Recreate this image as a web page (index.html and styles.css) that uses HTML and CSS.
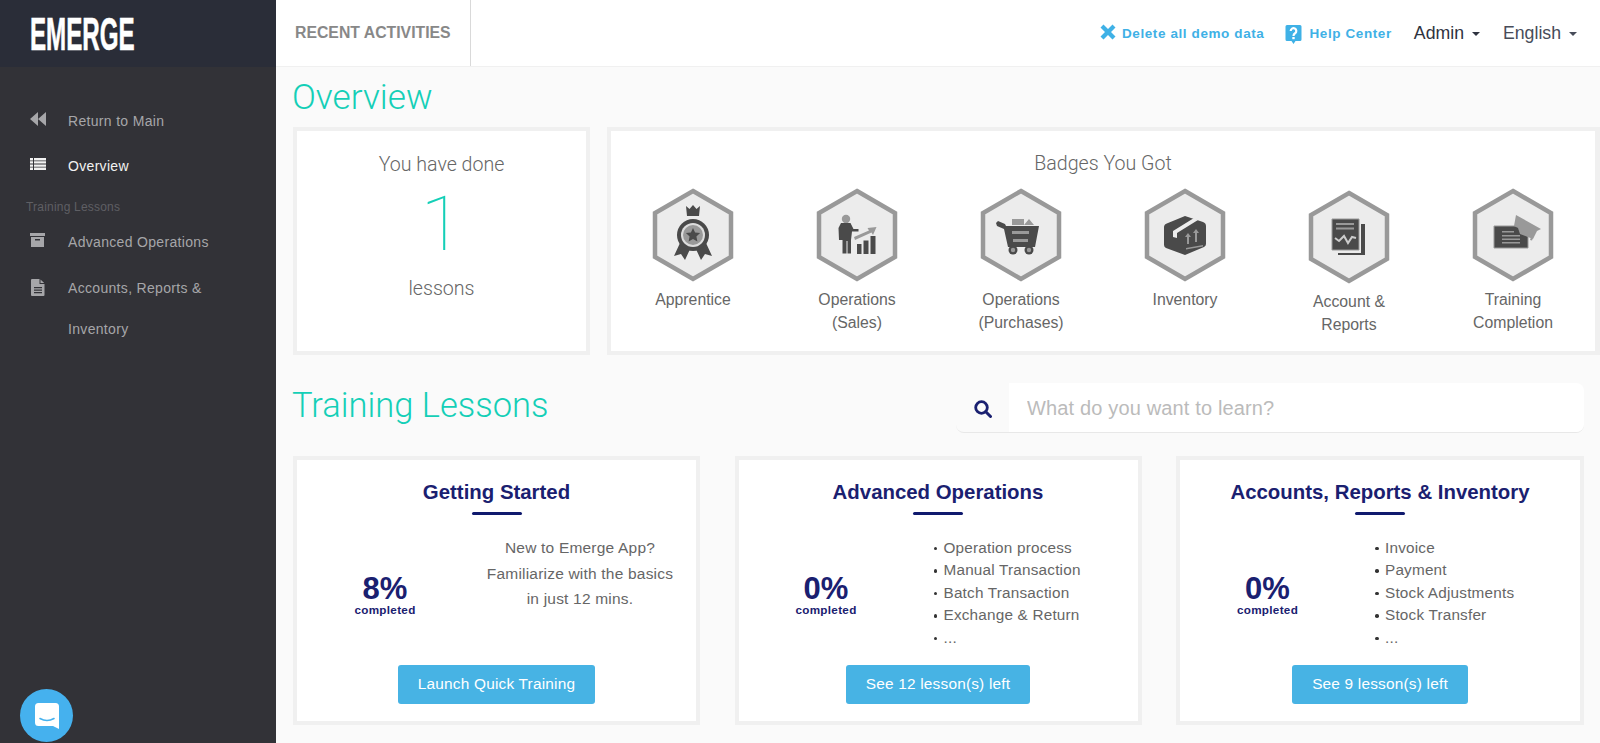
FILE: index.html
```html
<!DOCTYPE html>
<html lang="en">
<head>
<meta charset="utf-8">
<title>Emerge</title>
<link rel="stylesheet" href="styles.css">
</head>
<body>
<aside class="sidebar">
  <div class="brand"><span class="logo">EMERGE</span></div>
  <nav class="nav">
    <a class="nav-item"><svg class="nav-icon" viewBox="0 0 16 14"><path d="M8 0v14L0 7zM16 0v14L8 7z"/></svg><span>Return to Main</span></a>
    <a class="nav-item active"><svg class="nav-icon" viewBox="0 0 16 14"><path d="M0 1h3v2.400H0zM4 1h12v2.400H4zM0 4.200h3v2.400H0zM4 4.200h12v2.400H4zM0 7.400h3v2.400H0zM4 7.400h12v2.400H4zM0 10.600h3V13H0zM4 10.600h12V13H4z"/></svg><span>Overview</span></a>
    <div class="nav-head">Training Lessons</div>
    <a class="nav-item"><svg class="nav-icon" viewBox="0 0 16 14"><path fill-rule="evenodd" d="M0 0h15v3H0zM1 4h13v10H1zM5 6v1.500h5V6z"/></svg><span>Advanced Operations</span></a>
    <a class="nav-item multi"><svg class="nav-icon tall" viewBox="0 0 14 17"><path fill-rule="evenodd" d="M1 0h7.500v5h5v11a1 1 0 0 1-1 1H1a1 1 0 0 1-1-1V1a1 1 0 0 1 1-1zM3 8v1.200h8V8zM3 10.500v1.200h8v-1.200zM3 13v1.200h8V13zM9.500 0.500 13.200 4H9.500z"/></svg><span>Accounts, Reports &amp; Inventory</span></a>
  </nav>
</aside>

<div class="main">
  <header class="topbar">
    <div class="recent">RECENT ACTIVITIES</div>
    <div class="top-actions">
      <a class="link"><svg class="link-x" viewBox="0 0 16 16"><path d="M3.500 0.500 8 5l4.500-4.500 3 3L11 8l4.500 4.500-3 3L8 11l-4.500 4.500-3-3L5 8 .5 3.500z"/></svg>Delete all demo data</a>
      <a class="link help"><svg class="link-help" viewBox="0 0 16 19"><path d="M1.500 0h13A1.500 1.500 0 0 1 16 1.500v13a1.500 1.500 0 0 1-1.500 1.500H10l-2 3-2-3H1.500A1.500 1.500 0 0 1 0 14.500v-13A1.500 1.500 0 0 1 1.500 0z"/><path fill="none" stroke="#fff" stroke-width="2.200" d="M5.200 6a2.800 2.800 0 1 1 4.400 2.300C8.500 9 8 9.400 8 11"/><path fill="#fff" d="M6.800 12h2.400v2.200H6.800z"/></svg>Help Center</a>
      <a class="menu">Admin<i class="caret"></i></a>
      <a class="menu lang">English<i class="caret"></i></a>
    </div>
  </header>

  <main class="content">
    <h1 class="title overview-title">Overview</h1>
    <section class="summary">
      <div class="panel done">
        <div class="done-top">You have done</div>
        <div class="done-num">1</div>
        <div class="done-bottom">lessons</div>
      </div>
      <div class="panel badges">
        <div class="badges-title">Badges You Got</div>
        <div class="badge-row">
          <div class="badge">
            <svg class="hex" viewBox="0 0 82 94"><polygon class="hex-shape" points="41,3 79,25 79,69 41,91 3,69 3,25"/>
              <path class="d" d="M34 18l3.500 3 3.500-4 3.500 4 3.500-3-1 10H35z"/>
              <path class="d" d="M28 55l-6 13 7-2 4 6 6-13zM54 55l6 13-7-2-4 6-6-13z"/>
              <circle class="d" cx="41" cy="47" r="16"/><circle cx="41" cy="47" r="12" fill="#ddd"/><circle class="g" cx="41" cy="47" r="10"/>
              <path class="d" d="M41 40l2.100 4.600 5 .5-3.700 3.400 1 4.900-4.400-2.500-4.400 2.500 1-4.900-3.700-3.400 5-.5z"/></svg>
            <div class="badge-label">Apprentice</div>
          </div>
          <div class="badge">
            <svg class="hex" viewBox="0 0 82 94"><polygon class="hex-shape" points="41,3 79,25 79,69 41,91 3,69 3,25"/>
              <circle class="g" cx="30" cy="31" r="4.200"/>
              <path class="d" d="M25 35h9.500l3 6 5 0v2.500h-6.500L35 52v13.500h-3.500V53h-1v12.500H26.500V52H23l-.5-12z"/>
              <path class="g" d="M38 49l15-6.500-1.500-2.500 9-1-3.500 8-1.500-2.500L39 52z"/>
              <path class="d" d="M41 56h4.500v10H41zM47.500 52.500h5V66h-5zM54.500 48h5v18h-5z"/></svg>
            <div class="badge-label">Operations<br>(Sales)</div>
          </div>
          <div class="badge">
            <svg class="hex" viewBox="0 0 82 94"><polygon class="hex-shape" points="41,3 79,25 79,69 41,91 3,69 3,25"/>
              <path class="g" d="M32 31h12v6H32zM44 37l5-6 5 6z"/>
              <path class="d" d="M16 35l2-2 7 3 1 2h33l-4 21H28l-4-18-7-3z"/>
              <path class="g" d="M32 43h17v3H32zM33 51h15v3H33z"/>
              <circle class="d" cx="33" cy="62" r="4.500"/><circle class="d" cx="49" cy="62" r="4.500"/><circle class="g" cx="33" cy="62" r="2.200"/><circle class="g" cx="49" cy="62" r="2.200"/></svg>
            <div class="badge-label">Operations<br>(Purchases)</div>
          </div>
          <div class="badge">
            <svg class="hex" viewBox="0 0 82 94"><polygon class="hex-shape" points="41,3 79,25 79,69 41,91 3,69 3,25"/>
              <path class="d" d="M24 35l17-7 18 6q3 1 3 4v18q0 2-2 3L41 67l-19-7q-2-1-2-3V39q0-3 4-4z"/>
              <path fill="#ececec" d="M29 43l21-13 4 2-21 13v5l-4-1z"/>
              <path class="g" d="M43 56v-7h-2l3-4 3 4h-2v7zM51 54v-9h-2l3-4 3 4h-2v9zM42 60l17-3v1.500l-17 3z"/></svg>
            <div class="badge-label">Inventory</div>
          </div>
          <div class="badge low">
            <svg class="hex" viewBox="0 0 82 94"><polygon class="hex-shape" points="41,3 79,25 79,69 41,91 3,69 3,25"/>
              <path class="d" d="M53 34h4v31H30v-2h23z"/>
              <path class="d" d="M24 29h27v31H24z" stroke="#999"/>
              <path class="g" d="M28 33h18v2H28zM28 37.500h18v2H28z"/>
              <path fill="none" stroke="#ccc" stroke-width="2" d="M27 48l4 3 5-5 4 7 4-6 4 1"/></svg>
            <div class="badge-label">Account &amp;<br>Reports</div>
          </div>
          <div class="badge">
            <svg class="hex" viewBox="0 0 82 94"><polygon class="hex-shape" points="41,3 79,25 79,69 41,91 3,69 3,25"/>
              <path class="d" d="M22 38h34v22H22z" stroke="#999"/>
              <path class="g" d="M30 43h12v1.500H30zM30 47h18v1.500H30zM30 50.500h18v1.500H30zM30 54h18v1.500H30z"/>
              <path class="g" d="M44 27l25 14-4 2-4 8-13-5-2-6-4-2z"/><path class="g" d="M61 44l2 .5-3 8-2-.5z"/></svg>
            <div class="badge-label">Training<br>Completion</div>
          </div>
        </div>
      </div>
    </section>

    <section class="lessons-head">
      <h1 class="title">Training Lessons</h1>
      <div class="search">
        <span class="search-icon"><svg viewBox="0 0 18 18"><circle cx="7.500" cy="7.500" r="5.800" fill="none" stroke="#1a2070" stroke-width="2.800"/><path d="M11.800 11.800 16.500 16.500" stroke="#1a2070" stroke-width="3" stroke-linecap="round"/></svg></span>
        <input class="search-input" type="text" placeholder="What do you want to learn?">
      </div>
    </section>

    <section class="lessons">
      <article class="panel lesson first">
        <h2 class="lesson-title">Getting Started</h2>
        <div class="rule"></div>
        <div class="lesson-body">
          <div class="progress"><div class="pct">8%</div><div class="pct-label">completed</div></div>
          <p class="intro">New to Emerge App?<br>Familiarize with the basics<br>in just 12 mins.</p>
        </div>
        <a class="btn">Launch Quick Training</a>
      </article>
      <article class="panel lesson">
        <h2 class="lesson-title">Advanced Operations</h2>
        <div class="rule"></div>
        <div class="lesson-body">
          <div class="progress"><div class="pct">0%</div><div class="pct-label">completed</div></div>
          <ul class="topics"><li>Operation process</li><li>Manual Transaction</li><li>Batch Transaction</li><li>Exchange &amp; Return</li><li>...</li></ul>
        </div>
        <a class="btn">See 12 lesson(s) left</a>
      </article>
      <article class="panel lesson">
        <h2 class="lesson-title">Accounts, Reports &amp; Inventory</h2>
        <div class="rule"></div>
        <div class="lesson-body">
          <div class="progress"><div class="pct">0%</div><div class="pct-label">completed</div></div>
          <ul class="topics"><li>Invoice</li><li>Payment</li><li>Stock Adjustments</li><li>Stock Transfer</li><li>...</li></ul>
        </div>
        <a class="btn">See 9 lesson(s) left</a>
      </article>
    </section>
  </main>
</div>

<div class="chat"><svg viewBox="0 0 24 26"><path fill="#fff" d="M3.500 0h17A3.500 3.500 0 0 1 24 3.500V26l-6-3H3.500A3.500 3.500 0 0 1 0 19.500v-16A3.500 3.500 0 0 1 3.500 0z"/><path fill="none" stroke="#45b1ee" stroke-width="1.600" stroke-linecap="round" d="M5 15.500q7 4 14 0"/></svg></div>
</body>
</html>
```
FILE: styles.css
```css
* { box-sizing: border-box; }
html, body { margin: 0; height: 100%; }
body {
  display: flex;
  height: 743px;
  overflow: hidden;
  background: #fafafa;
  font-family: "Liberation Sans", Arial, sans-serif;
  color: #666;
}

/* sidebar */
.sidebar { flex: 0 0 276px; background: #323237; }
.brand { height: 67px; background: #2a2d38; padding-left: 30px; display: flex; align-items: center; }
.logo {
  display: inline-block;
  font-weight: 700;
  font-size: 46px;
  line-height: 1;
  color: #fff;
  transform: scaleX(.525);
  transform-origin: left center;
  -webkit-text-stroke: .6px #fff;
}
.nav { padding-top: 32px; }
.nav-item {
  display: flex;
  align-items: center;
  height: 45px;
  padding-left: 30px;
  color: #a6a6a9;
  font-size: 14px;
  letter-spacing: .32px;
}
.nav-item.active { color: #f2f2f2; }
.nav-item span { line-height: 41px; }
.nav-icon { flex: 0 0 16px; width: 16px; height: 14px; margin-right: 22px; margin-top: -5px; fill: #a6a6a9; }
.nav-icon.tall { height: 17px; align-self: flex-start; margin-top: 11px; width: 14px; flex-basis: 14px; margin-left: 1px; margin-right: 23px; }
.active .nav-icon { fill: #f2f2f2; }
.nav-item.multi { height: auto; align-items: flex-start; padding-right: 60px; margin-top: 3px; }
.nav-head { padding-left: 26px; font-size: 12px; letter-spacing: .2px; color: #5f5f64; height: 34px; line-height: 34px; margin-bottom: -4px; margin-top: 1px; }

/* main */
.main { flex: 1; min-width: 0; display: flex; flex-direction: column; }
.topbar {
  flex: 0 0 66px;
  display: flex;
  justify-content: space-between;
  background: #fff;
  border-bottom: 1px solid #f0f0f0;
}
.recent {
  width: 195px;
  padding-left: 19px;
  border-right: 1px solid #d9d9d9;
  font-size: 15.800px;
  font-weight: 700;
  color: #888;
  line-height: 66px;
  white-space: nowrap;
}
.top-actions { display: flex; align-items: center; padding-right: 23px; }
.link { display: flex; align-items: center; color: #3fb1e6; font-size: 13.500px; font-weight: 700; letter-spacing: .6px; margin-right: 21px; }
.link.help { margin-right: 22px; }
.link-x { width: 16px; height: 16px; fill: #3fb1e6; margin-right: 6px; margin-top: -2px; }
.link-help { width: 17px; height: 19px; fill: #3fb1e6; margin-right: 7px; margin-top: 2px; }
.menu { display: flex; align-items: center; color: #2f3340; font-size: 17.700px; margin-right: 23px; }
.menu.lang { color: #474c59; margin-right: 0; }
.caret { width: 0; height: 0; border: 4.500px solid transparent; border-top-color: currentColor; border-bottom: 0; margin-left: 8px; margin-top: 2px; }

.content { flex: 1; padding: 0 0 0 17px; min-height: 0; }
.title { margin: 0 0 0 -1px; font-size: 34.500px; color: #14cfb7; font-family: Roboto, "Liberation Sans", sans-serif; font-weight: 300; line-height: 60px; }
.overview-title { height: 60px; font-size: 35.200px; }

.panel { background: #fff; border: 4px solid #f0f0f0; }
.summary { display: flex; gap: 17px; height: 228px; }
.done { flex: 0 0 297px; text-align: center; font-family: Roboto, "Liberation Sans", sans-serif; font-weight: 300; color: #666; padding-top: 20px; font-size: 19.600px; }
.done-top { line-height: 28px; }
.done-num { font-size: 76px; line-height: 76px; color: #14cfb7; font-weight: 100; margin: 7px 0 12px; }
.done-bottom { line-height: 30px; }
.badges { flex: 1; min-width: 0; border-right-width: 5px; }
.badges-title { text-align: center; font-family: Roboto, "Liberation Sans", sans-serif; font-weight: 300; font-size: 19.600px; line-height: 28px; padding-top: 19px; color: #666; }
.badge-row { display: grid; grid-template-columns: repeat(6, 1fr); margin-top: 10px; }
.badge { display: flex; flex-direction: column; align-items: center; }
.hex { width: 82px; height: 94px; display: block; }
.hex-shape { fill: #ececec; stroke: #999; stroke-width: 4.500; }
.d { fill: #4a4a4a; }
.g { fill: #999; }
.badge-label { font-size: 15.800px; line-height: 23px; text-align: center; margin-top: 6px; color: #666; }
.badge.low { padding-top: 2px; }

.lessons-head { display: flex; justify-content: space-between; align-items: flex-start; padding-right: 16px; margin-top: 28px; }
.lessons-head .title { line-height: 44px; }
.search { width: 628px; height: 50px; display: flex; border-bottom: 1px solid #e8e8e8; border-radius: 8px; }
.search-icon { flex: 0 0 53px; display: flex; align-items: center; justify-content: center; }
.search-icon svg { width: 18px; height: 18px; margin-top: 2px; }
.search-input { flex: 1; min-width: 0; border: 0; outline: 0; background: #fff; border-radius: 0 8px 8px 0; padding: 2px 18px 0; font: 20px "Liberation Sans", Arial, sans-serif; letter-spacing: .15px; color: #555; }
.search-input::placeholder { color: #bbb; opacity: 1; }

.lessons { display: grid; grid-template-columns: 407px 407px 408px; gap: 34.500px; padding-top: 23px; }
.lesson { height: 269px; display: flex; flex-direction: column; align-items: center; padding-top: 19px; }
.lesson-title { margin: 0; font-size: 20.400px; font-weight: 700; line-height: 26px; color: #1a2070; white-space: nowrap; }
.rule { width: 50px; height: 3px; border-radius: 2px; background: #101a6e; margin-top: 7px; }
.lesson-body { align-self: stretch; height: 132px; display: flex; align-items: center; padding-top: 13px; }
.progress { flex: 0 0 175px; text-align: center; color: #1a2070; font-weight: 700; margin-top: 17px; }
.first .progress { flex-basis: 176px; }
.pct { font-size: 31px; line-height: 28px; }
.pct-label { font-size: 11.700px; line-height: 14px; letter-spacing: .3px; }
.intro { margin: 0 0 28px 2px; width: 210px; text-align: center; font-size: 15.500px; line-height: 25.500px; letter-spacing: .2px; color: #666; }
.topics { list-style: none; margin: 11px 0 0; padding: 0 0 0 30px; font-size: 15.300px; line-height: 22.400px; letter-spacing: .2px; color: #666; }
.topics li { position: relative; }
.topics li::before { content: ""; position: absolute; left: -10px; top: 10px; width: 3.500px; height: 3.500px; border-radius: 50%; background: #333; }
.btn { margin-top: 18px; height: 39px; line-height: 38px; padding: 0 20px; background: #47b3e4; border-radius: 3px; color: #fff; font-size: 15.400px; letter-spacing: .2px; }

.chat { position: absolute; left: 20px; top: 689px; width: 53px; height: 53px; border-radius: 50%; background: #45b1ee; display: flex; align-items: center; justify-content: center; }
.chat svg { width: 24px; height: 26px; }
```
